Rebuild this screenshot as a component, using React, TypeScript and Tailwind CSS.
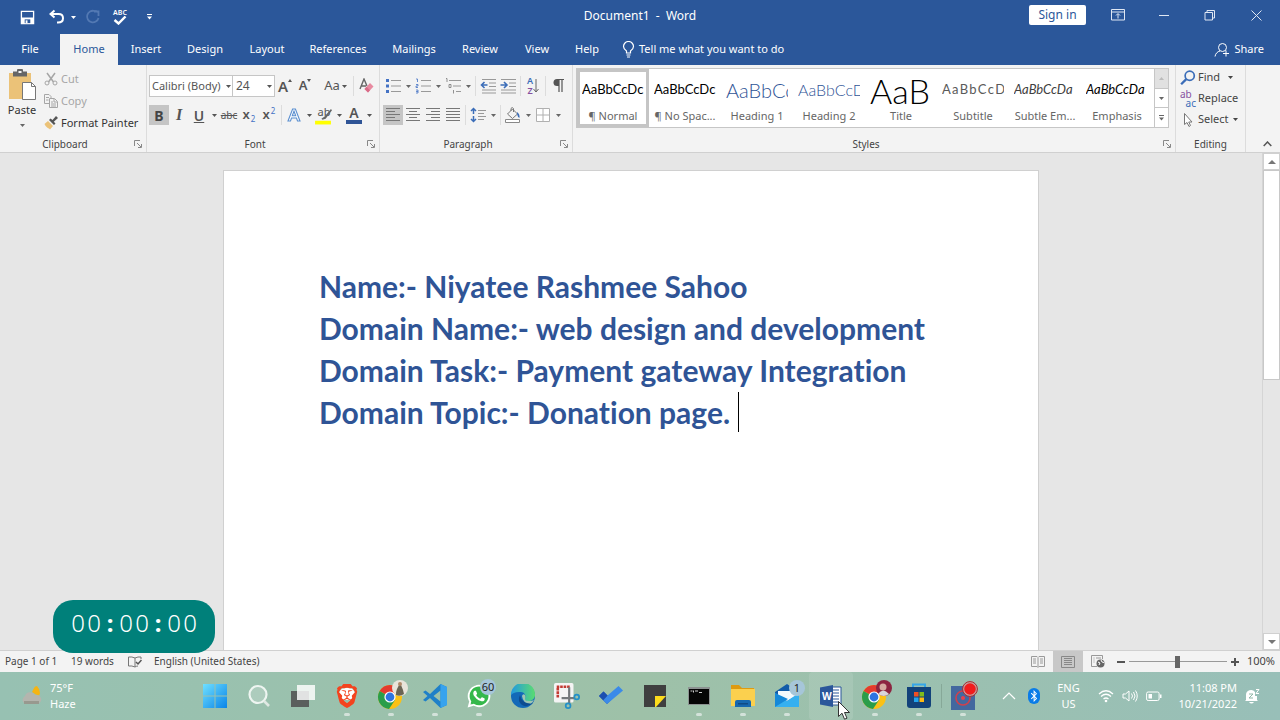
import React from "react";
import { FaBluetoothB, FaBrave, FaWhatsapp } from "react-icons/fa6";
import clsx from "clsx";

type IconProps = { children: React.ReactNode; box?: string; className?: string };

function Icon({ children, box = "0 0 16 16", className = "size-4" }: IconProps) {
  return (
    <svg viewBox={box} className={clsx("shrink-0", className)} fill="none" aria-hidden="true">
      {children}
    </svg>
  );
}

function Caret({ className = "w-[10px]" }: { className?: string }) {
  return (
    <span className={clsx("flex justify-center", className)}>
      <Icon box="0 0 5 3" className="w-[5px] h-[3px]">
        <path d="M0 0h5L2.5 3z" fill="currentColor" />
      </Icon>
    </span>
  );
}

function Tool({ label, active, wide, children }: { label: string; active?: boolean; wide?: boolean; children: React.ReactNode }) {
  return (
    <button
      aria-label={label}
      className={clsx("h-5 flex items-center justify-center shrink-0", wide ? "w-9" : "w-5", active && "bg-[#c5c5c5]")}
    >
      {children}
    </button>
  );
}

function Divider() {
  return <span className="w-px h-5 mx-0.5 bg-[#dcdcdc] shrink-0" />;
}

function Group({ title, launcher, className, children }: { title: string; launcher?: boolean; className: string; children: React.ReactNode }) {
  return (
    <section className={clsx("relative flex flex-col border-r border-[#dcdcdc] shrink-0", className)}>
      <div className="flex-1">{children}</div>
      <div className={clsx("h-4 text-[10px] leading-4 text-center text-[#444]", launcher && "pr-4")}>{title}</div>
      {launcher && (
        <button aria-label={`${title} settings`} className="absolute right-1 bottom-1">
          <Icon box="0 0 8 8" className="size-2">
            <path d="M.5 6V.5H6M3 3l4 4M7.5 4v3.500H4" stroke="#888" />
          </Icon>
        </button>
      )}
    </section>
  );
}

const tabs = [
  { name: "File", style: "w-[60px]" },
  { name: "Home", style: "w-[58px] bg-[#f3f3f3] text-[#2b579a]" },
  { name: "Insert", style: "w-14" },
  { name: "Design", style: "w-[62px]" },
  { name: "Layout", style: "w-[62px]" },
  { name: "References", style: "w-20" },
  { name: "Mailings", style: "w-[72px]" },
  { name: "Review", style: "w-[60px]" },
  { name: "View", style: "w-[54px]" },
  { name: "Help", style: "w-[46px]" },
];

const styles = [
  { name: "¶ Normal", text: "AaBbCcDc", look: "text-[13px] text-black" },
  { name: "¶ No Spac...", text: "AaBbCcDc", look: "text-[13px] text-black" },
  { name: "Heading 1", text: "AaBbCc", look: "text-[20px] font-light text-[#2f5496]" },
  { name: "Heading 2", text: "AaBbCcD", look: "text-[16px] font-light text-[#2f5496]" },
  { name: "Title", text: "AaB", look: "text-[34px] font-light text-black" },
  { name: "Subtitle", text: "AaBbCcD", look: "text-[13px] tracking-widest text-[#5a5a5a]" },
  { name: "Subtle Em...", text: "AaBbCcDa", look: "text-[13px] italic text-[#404040]" },
  { name: "Emphasis", text: "AaBbCcDa", look: "text-[13px] italic text-black" },
];

const lines = [
  "Name:- Niyatee Rashmee Sahoo",
  "Domain Name:- web design and development",
  "Domain Task:- Payment gateway Integration",
  "Domain Topic:- Donation page.",
];

function TitleBar() {
  return (
    <header className="relative h-[34px] flex items-center justify-between bg-[#2b579a] text-white shrink-0">
      <div className="flex items-center pl-5 h-full">
        <button aria-label="Save">
          <Icon className="size-[15px]">
            <path d="M1.500 1.500h13v13h-13z" stroke="#fff" strokeWidth="1.400" />
            <path d="M1.500 8h13v6.500h-13z" fill="#fff" />
            <path d="M5 10h6v4H5z" fill="#2b579a" />
            <path d="M6 11h2v3H6z" fill="#fff" />
          </Icon>
        </button>
        <button aria-label="Undo" className="ml-[14px]">
          <Icon>
            <path d="M5.500 1.500 1.500 5l4 3.500M2 5h7.500c3 0 4.500 2 4.500 4.200S12.500 13.500 9 13.500H8" stroke="#fff" strokeWidth="2" />
          </Icon>
        </button>
        <Caret className="w-4" />
        <button aria-label="Redo" className="ml-1">
          <Icon>
            <path d="M9 2.500h4.500V7M13 3c-1-.8-2-1-3.500-1A5.800 5.800 0 1 0 13.500 9" stroke="#5379b3" strokeWidth="1.800" />
          </Icon>
        </button>
        <button aria-label="Spelling" className="ml-3 flex flex-col items-center text-[7px] leading-[7px] font-semibold">
          <span>ABC</span>
          <Icon box="0 0 14 9" className="w-[14px] h-[9px]">
            <path d="m1.500 4 4 3.500L12.500.500" stroke="#fff" strokeWidth="2.400" />
          </Icon>
        </button>
        <button aria-label="Customize" className="ml-5">
          <Icon box="0 0 5 6" className="w-[5px] h-[6px]">
            <path d="M0 0h5v1H0zM0 2.500h5L2.500 5.500z" fill="#fff" />
          </Icon>
        </button>
      </div>
      <h1 className="absolute left-1/2 -translate-x-1/2 top-2 text-[12px] leading-4 whitespace-pre">Document1  -  Word</h1>
      <div className="flex items-center h-[30px] self-start">
        <button className="w-[57px] h-5 rounded-[2px] bg-white text-[12px] leading-5 text-[#2b579a]">Sign in</button>
        <button aria-label="Ribbon options" className="w-16 flex justify-center">
          <Icon box="0 0 14 12" className="w-[14px] h-3">
            <path d="M.5.500h13v10.500H.5zM.5 3h13M7 9.500V5M5 6.500l2-2 2 2" stroke="#dfe7f3" />
          </Icon>
        </button>
        <button aria-label="Minimize" className="w-7 flex justify-center">
          <span className="w-[10px] h-px bg-[#dfe7f3]" />
        </button>
        <button aria-label="Restore" className="w-16 flex justify-center">
          <Icon box="0 0 12 12" className="size-3">
            <path d="M1 3.500h7.500V11H1zM3 3.500v-2h7.500V9h-2" stroke="#dfe7f3" />
          </Icon>
        </button>
        <button aria-label="Close" className="w-[38px] pr-[10px] flex justify-center">
          <Icon box="0 0 11 11" className="size-[11px]">
            <path d="m.5.500 10 10M10.500.500l-10 10" stroke="#dfe7f3" />
          </Icon>
        </button>
      </div>
    </header>
  );
}

function Tabs() {
  return (
    <nav className="h-[31px] flex bg-[#2b579a] text-white text-[11px] shrink-0">
      {tabs.map((tab) => (
        <button key={tab.name} className={clsx("h-full", tab.style)}>
          {tab.name}
        </button>
      ))}
      <button className="ml-3 flex items-center gap-1">
        <Icon box="0 0 13 17" className="w-[13px] h-[17px]">
          <path d="M4.500 12V10C2.500 8.500 1.500 7.500 1.500 5.500a5 5 0 0 1 10 0c0 2-1 3-3 4.500v2zM4.500 14h4M5 16h3" stroke="#fff" strokeWidth="1.200" />
        </Icon>
        Tell me what you want to do
      </button>
      <button className="ml-auto mr-4 flex items-center gap-1">
        <Icon className="size-4">
          <circle cx="8.500" cy="5.500" r="4" stroke="#fff" />
          <path d="M1 14.500c.5-3 2.500-5 5-5.500M9 11.500h6M12 8.500v6" stroke="#fff" />
        </Icon>
        Share
      </button>
    </nav>
  );
}

function Clipboard() {
  return (
    <Group title="Clipboard" launcher className="w-[147px]">
      <div className="flex pt-[3px] pl-2 text-[11px] text-[#333]">
        <button className="flex flex-col items-center w-7 leading-4">
          <Icon box="0 0 30 34" className="w-[30px] h-[34px]">
            <path d="M2 5h22v26H2z" fill="#ebc278" />
            <path d="M6 3.500h4V2q0-1 1-1h4q1 0 1 1v1.500h4v5H6z" fill="#666" />
            <path d="M11.500 3h3v2h-3z" fill="#f3f3f3" />
            <path d="M15.500 14.500h9l4 4v13h-13z" fill="#fff" stroke="#777" />
            <path d="M24.500 14.500v4h4" stroke="#777" />
          </Icon>
          Paste
          <span className="pt-1.5 text-[#666]">
            <Caret />
          </span>
        </button>
        <div className="ml-2 flex flex-col">
          <button className="h-[22px] flex items-center gap-[3px] text-[#a6a6a6]" disabled>
            <Icon box="0 0 14 14" className="size-[14px]">
              <path d="m3 1 6.500 9M11 1 4.500 10" stroke="#a6a6a6" strokeWidth="1.500" />
              <circle cx="3" cy="11" r="2" stroke="#a6a6a6" />
              <circle cx="11" cy="11" r="2" stroke="#a6a6a6" />
            </Icon>
            Cut
          </button>
          <button className="h-[22px] flex items-center gap-[3px] text-[#a6a6a6]" disabled>
            <Icon box="0 0 14 14" className="size-[14px]">
              <path d="M5 9.500H.5v-9H5L7 2.500v2M2 3.500h3M2 6h2.500M5.500 4.500h5l3 3v6h-8zM10 5v3h3M7 8h2M7 10h5M7 12h5" stroke="#a6a6a6" />
            </Icon>
            Copy
          </button>
          <button className="h-[22px] flex items-center gap-[3px] whitespace-nowrap">
            <Icon box="0 0 14 14" className="size-[14px]">
              <path d="M1 7.500 4 5l5 5-3 3.500C5 12 2 12 .5 8z" fill="#ebc278" />
              <path d="m5 4 5 5 1.500-1.500-1.700-1.700L14 2 12 0 8.500 4 6.500 2.500z" fill="#555" />
            </Icon>
            Format Painter
          </button>
        </div>
      </div>
    </Group>
  );
}

function FontGroup() {
  return (
    <Group title="Font" launcher className="w-[233px]">
      <div className="flex items-center h-[22px] mt-[10px] pl-0.5 text-[#555]">
        <div className="flex items-center h-[22px] w-[84px] border border-[#c6c6c6] bg-white">
          <select aria-label="Font" className="appearance-none w-[74px] pl-[2px] text-[11px] text-[#555]">
            <option>Calibri (Body)</option>
          </select>
          <Caret className="w-2" />
        </div>
        <div className="flex items-center h-[22px] w-[43px] -ml-px border border-[#c6c6c6] bg-white">
          <select aria-label="Font size" className="appearance-none w-[31px] pl-[3px] text-[12px] text-[#555]">
            <option>24</option>
          </select>
          <Caret />
        </div>
        <Tool label="Grow font">
          <span className="text-[15px] font-semibold">A</span>
          <Icon box="0 0 4 3" className="w-1 h-[3px] mb-3">
            <path d="M0 3h4L2 0z" fill="#555" />
          </Icon>
        </Tool>
        <Tool label="Shrink font">
          <span className="text-[13px] font-semibold">A</span>
          <Icon box="0 0 4 3" className="w-1 h-[3px] mb-3">
            <path d="M0 0h4L2 3z" fill="#555" />
          </Icon>
        </Tool>
        <Tool label="Change case" wide>
          <span className="pl-2 text-[13px]">Aa</span>
          <Caret />
        </Tool>
        <Divider />
        <Tool label="Clear formatting">
          <Icon>
            <path d="m2 11 4-10 3 7M3.500 8H8" stroke="#666" strokeWidth="1.400" />
            <path d="m6.500 11 5.500-6 3.500 3.500-5.500 6z" fill="#e88aa0" />
            <path d="m6.500 11 2-2.200 3.500 3.500-2 2.200z" fill="#d96b88" />
          </Icon>
        </Tool>
      </div>
      <div className="flex items-center h-5 mt-2 pl-0.5 text-[#555]">
        <Tool label="Bold" active>
          <b className="text-[14px] text-[#444]">B</b>
        </Tool>
        <Tool label="Italic">
          <i className="font-['Liberation_Serif'] font-bold text-[16px]">I</i>
        </Tool>
        <Tool label="Underline">
          <span className="text-[14px] font-semibold underline">U</span>
        </Tool>
        <Caret />
        <Tool label="Strikethrough">
          <s className="text-[10px]">abc</s>
        </Tool>
        <Tool label="Subscript">
          <span className="text-[13px] font-semibold">x</span>
          <span className="text-[8px] text-[#4472c4] pt-2 pl-px">2</span>
        </Tool>
        <Tool label="Superscript">
          <span className="text-[13px] font-semibold">x</span>
          <span className="text-[8px] text-[#4472c4] pb-2 pl-px">2</span>
        </Tool>
        <Divider />
        <Tool label="Text effects">
          <Icon>
            <path d="m2 14 4.600-12h2.800L14 14h-2.500l-1-3h-5l-1 3zM6.300 8.700h3.400L8 4z" fill="#fff" stroke="#5b8fd0" strokeWidth="1.100" />
          </Icon>
        </Tool>
        <Caret />
        <Tool label="Highlight">
          <span className="relative flex h-5 items-start">
            <span className="text-[11px] leading-[13px]">ab</span>
            <Icon box="0 0 17 17" className="absolute -left-1 top-0.5 size-[18px]">
              <path d="m16 2-6 7-3 2 1 1 3-1 6-8z" fill="#666" />
              <path d="M1 13h15v3.500H1z" fill="#ff0" />
            </Icon>
          </span>
        </Tool>
        <Caret />
        <Tool label="Font colour">
          <span className="w-4 h-[18px] border-b-4 border-[#2f5496] text-[14px] leading-[14px] font-semibold text-center">A</span>
        </Tool>
        <Caret />
      </div>
    </Group>
  );
}

function ParagraphGroup() {
  return (
    <Group title="Paragraph" launcher className="w-[193px]">
      <div className="flex items-center h-5 mt-[11px] pl-[3px] text-[#666]">
        <Tool label="Bullets">
          <Icon>
            <path d="M6 2.500h10M6 8h10M6 13.500h10" stroke="#999" />
            <path d="M1 1h3v3H1zM1 6.500h3v3H1zM1 12h3v3H1z" fill="#4472c4" />
          </Icon>
        </Tool>
        <Caret />
        <Tool label="Numbering">
          <Icon>
            <path d="M6 2.500h10M6 8h10M6 13.500h10" stroke="#999" />
            <path d="M1 1h1.500v3M1 6.500h2V8H1v1.500h2M1 12h2v3H1M1 13.500h2" stroke="#4472c4" strokeWidth=".8" />
          </Icon>
        </Tool>
        <Caret />
        <Tool label="Multilevel list">
          <Icon>
            <path d="M4 2.500h12M8 8h8M11 13.500h5" stroke="#999" />
            <path d="M1 .500h1V4M4 6.500h2v3H4zM8.500 12v3.500" stroke="#777" strokeWidth=".8" />
          </Icon>
        </Tool>
        <Caret />
        <Divider />
        <Tool label="Decrease indent">
          <Icon>
            <path d="M2 1.500h14M9 5h7M9 8.500h7M2 12h14M2 15h14" stroke="#999" />
            <path d="M7.500 7H1.500M4.500 4l-3 3 3 3" stroke="#3b6db8" strokeWidth="1.600" />
          </Icon>
        </Tool>
        <Tool label="Increase indent">
          <Icon>
            <path d="M1 1.500h15M9 5h7M9 8.500h7M1 12h15M1 15h15" stroke="#999" />
            <path d="M.5 7h6M4 4l3 3-3 3" stroke="#3b6db8" strokeWidth="1.600" />
          </Icon>
        </Tool>
        <Divider />
        <Tool label="Sort">
          <span className="flex flex-col text-[9px] leading-[10px] font-semibold">
            <span className="text-[#3b6db8]">A</span>
            <span className="text-[#8650a0]">Z</span>
          </span>
          <Icon box="0 0 6 16" className="w-[6px] h-4">
            <path d="M3 1v13M.5 11 3 14l2.500-3" stroke="#666" />
          </Icon>
        </Tool>
        <Divider />
        <Tool label="Show marks">
          <Icon>
            <path d="M8 1.500h6M9 1v13M12 1v13" stroke="#555" strokeWidth="1.200" />
            <path d="M9 1H7a3.500 3.500 0 0 0 0 7h2z" fill="#555" />
          </Icon>
        </Tool>
      </div>
      <div className="flex items-center h-5 mt-[9px] pl-[3px] text-[#666]">
        <Tool label="Align left" active>
          <Icon>
            <path d="M1 1.500h14M1 4.500h9M1 7.500h14M1 10.500h9M1 13.500h14" stroke="#777" />
          </Icon>
        </Tool>
        <Tool label="Centre">
          <Icon>
            <path d="M1 1.500h14M4 4.500h8M1 7.500h14M4 10.500h8M1 13.500h14" stroke="#777" />
          </Icon>
        </Tool>
        <Tool label="Align right">
          <Icon>
            <path d="M1 1.500h14M6 4.500h9M1 7.500h14M6 10.500h9M1 13.500h14" stroke="#777" />
          </Icon>
        </Tool>
        <Tool label="Justify">
          <Icon>
            <path d="M1 1.500h14M1 4.500h14M1 7.500h14M1 10.500h14M1 13.500h14" stroke="#777" />
          </Icon>
        </Tool>
        <Divider />
        <Tool label="Line spacing">
          <Icon>
            <path d="M3.500 1.500V7M3.500 9v5.500M1 4l2.500-2.500L6 4M1 12l2.500 2.500L6 12" stroke="#3b6db8" strokeWidth="1.500" />
            <path d="M8 3.500h8M8 6.500h6M8 9.500h8M8 12.500h6" stroke="#999" />
          </Icon>
        </Tool>
        <Caret />
        <Divider />
        <Tool label="Shading">
          <Icon>
            <path d="m2.500 7 5-5 5 5-5 4.500zM6 4V1.500Q7-.5 8.500 1.500V5" stroke="#777" />
            <path d="M12 5q3 2 2.500 6-2-1-2.500-4z" fill="#3b6db8" />
            <path d="M.5 12.500h14v3H.5z" fill="#fff" stroke="#888" />
          </Icon>
        </Tool>
        <Caret />
        <Tool label="Borders">
          <Icon>
            <path d="M1.500 1.500h13v13h-13zM8 1.500v13M1.500 8h13" stroke="#b0b0b0" fill="#fff" />
          </Icon>
        </Tool>
        <Caret />
      </div>
    </Group>
  );
}

function StylesGroup() {
  return (
    <Group title="Styles" launcher className="flex-1 min-w-0">
      <div className="flex mt-[3px] ml-[3px] mr-[6px] h-[60px] border border-[#c6c6c6] bg-white">
        <div className="flex flex-1 overflow-hidden">
          {styles.map((style, i) => (
            <button
              key={style.name}
              className={clsx("w-[72px] h-full shrink-0 flex flex-col items-center border-[3px]", i === 0 ? "border-[#c5c5c5]" : "border-transparent")}
            >
              <span className="flex w-[62px] h-9 items-center overflow-hidden">
                <span className={clsx("font-['Lato','Open_Sans',sans-serif] whitespace-nowrap", style.look)}>{style.text}</span>
              </span>
              <span className="text-[11px] leading-4 text-[#666] whitespace-nowrap">{style.name}</span>
            </button>
          ))}
        </div>
        <div className="w-[14px] flex flex-col border-l border-[#c6c6c6] text-[#666]">
          <button aria-label="Previous styles" className="flex-1 bg-[#e1e1e1] flex items-center justify-center text-[#bbb]">
            <Icon box="0 0 5 3" className="w-[5px] h-[3px]">
              <path d="M0 3h5L2.500 0z" fill="currentColor" />
            </Icon>
          </button>
          <button aria-label="Next styles" className="flex-1 flex items-center justify-center border-y border-[#c6c6c6]">
            <Caret />
          </button>
          <button aria-label="More styles" className="flex-1 flex items-center justify-center">
            <Icon box="0 0 5 6" className="w-[5px] h-[6px]">
              <path d="M0 0h5v1H0zM0 2.500h5L2.500 5.500z" fill="#666" />
            </Icon>
          </button>
        </div>
      </div>
    </Group>
  );
}

function EditingGroup() {
  return (
    <Group title="Editing" className="w-[70px]">
      <div className="flex flex-col pt-0.5 pl-1 text-[11px] text-[#444]">
        <button className="h-[21px] flex items-center gap-0.5">
          <Icon box="0 0 14 14" className="size-4">
            <circle cx="8.500" cy="5" r="4" stroke="#3b6db8" strokeWidth="1.500" />
            <path d="M5.500 8 1 12.500" stroke="#3b6db8" strokeWidth="2" />
          </Icon>
          Find
          <Caret className="w-4" />
        </button>
        <button className="h-[21px] flex items-center gap-0.5">
          <span className="w-4 flex flex-col text-[10px] leading-[9px] text-left">
            <span className="text-[#8650a0]">ab</span>
            <span className="text-[#3b6db8] text-right">ac</span>
          </span>
          Replace
        </button>
        <button className="h-[21px] flex items-center gap-0.5">
          <Icon>
            <path d="M4.500 1.500v11l2.500-2 2 4 1.500-1-1.800-3.500H12z" stroke="#777" fill="#fff" />
          </Icon>
          Select
          <Caret />
        </button>
      </div>
    </Group>
  );
}

function DocumentArea() {
  return (
    <main className="flex-1 min-h-0 flex bg-[#e6e6e6]">
      <div className="flex-1 flex justify-center pt-[17px] overflow-hidden">
        <article className="w-[816px] px-[95px] pt-[94px] bg-white border border-b-0 border-[#d0d0d0] font-['Lato','Open_Sans',sans-serif] text-[30px] leading-[42px] font-bold text-[#2f5496] whitespace-nowrap [font-variant-ligatures:none]">
          {lines.map((line, i) => (
            <p key={line} className="flex items-center">
              {line}
              {i === lines.length - 1 && <span className="w-px h-10 ml-2 bg-black" />}
            </p>
          ))}
        </article>
      </div>
      <div className="w-[18px] flex flex-col border-l border-[#d5d5d5] bg-[#e6e6e6]">
        <button aria-label="Scroll up" className="h-[17px] flex items-center justify-center border border-[#d0d0d0] bg-white">
          <Icon box="0 0 8 4" className="w-2 h-1">
            <path d="M0 4h8L4 0z" fill="#777" />
          </Icon>
        </button>
        <div className="h-[210px] border border-[#c8c8c8] bg-white" />
        <button aria-label="Scroll down" className="mt-auto h-[17px] flex items-center justify-center border border-[#d0d0d0] bg-white">
          <Icon box="0 0 8 4" className="w-2 h-1">
            <path d="M0 0h8L4 4z" fill="#777" />
          </Icon>
        </button>
      </div>
    </main>
  );
}

function StatusBar() {
  return (
    <footer className="h-[22px] flex items-center justify-between pl-[5px] pr-[5px] bg-[#f3f3f3] border-t border-[#d0d0d0] text-[10px] text-[#444] shrink-0">
      <div className="flex items-center">
        <span className="w-[66px]">Page 1 of 1</span>
        <span className="w-[57px]">19 words</span>
        <Icon box="0 0 14 12" className="w-[14px] h-3 mr-3">
          <path d="M7 2v9M7 2Q4 .500.500 1v9Q4 9.500 7 11q1.500-1 3-1M7 2q3-1.500 6-1v2" stroke="#777" />
          <path d="m8 6 2 2 3.500-4" stroke="#555" strokeWidth="1.500" />
        </Icon>
        <span>English (United States)</span>
      </div>
      <div className="flex items-center h-full">
        <button aria-label="Read mode" className="w-[30px] flex justify-center">
          <Icon box="0 0 14 12" className="w-[14px] h-3">
            <path d="M.5.500h5.500l1 1 1-1h5.500v10H8l-1 1-1-1H.5zM7 2v9M2 3h3M2 5h3M2 7h3M9 3h3M9 5h3M9 7h3" stroke="#9a9a9a" />
          </Icon>
        </button>
        <button aria-label="Print layout" className="w-[30px] h-full flex items-center justify-center bg-[#c8c8c8]">
          <Icon box="0 0 14 12" className="w-[14px] h-3">
            <path d="M.5.500h13v11H.5zM3 2.500h8M3 4.500h8M3 6.500h8M3 8.500h8" stroke="#888" />
          </Icon>
        </button>
        <button aria-label="Web layout" className="w-[30px] flex justify-center">
          <Icon box="0 0 14 13" className="w-[14px] h-[13px]">
            <path d="M6 11.500H.5v-11h11V4M2.500 3h1M2.500 5h1M2.500 7h1M5 3h5" stroke="#999" />
            <circle cx="9.500" cy="8.500" r="4" fill="#666" />
            <path d="m7 7 2 1-1 2M10 5l1 2 2 .500" stroke="#fff" />
          </Icon>
        </button>
        <button aria-label="Zoom out" className="mx-1 w-2 h-0.5 bg-[#555]" />
        <input
          type="range"
          aria-label="Zoom"
          defaultValue={50}
          className="appearance-none w-[98px] h-px bg-[#999] [&::-webkit-slider-thumb]:appearance-none [&::-webkit-slider-thumb]:w-[5px] [&::-webkit-slider-thumb]:h-3 [&::-webkit-slider-thumb]:bg-[#666]"
        />
        <button aria-label="Zoom in" className="mx-1">
          <Icon box="0 0 8 8" className="size-2">
            <path d="M4 0v8M0 4h8" stroke="#555" strokeWidth="2" />
          </Icon>
        </button>
        <span className="ml-1 text-[11px]">100%</span>
      </div>
    </footer>
  );
}

function ChromeLogo({ badge }: { badge: React.ReactNode }) {
  return (
    <Icon box="0 0 34 34" className="size-[34px]">
      <circle cx="16" cy="18" r="12" fill="#fbc116" />
      <path d="M16 18 5.600 12A12 12 0 0 1 26.400 12z" fill="#e33b2e" />
      <path d="M5.600 12A12 12 0 0 0 15 30l6-9-5-3z" fill="#2a9d4a" />
      <circle cx="16" cy="18" r="5.600" fill="#fff" />
      <circle cx="16" cy="18" r="4.400" fill="#2f74e0" />
      {badge}
    </Icon>
  );
}

const apps: { name: string; running?: boolean; icon: React.ReactNode }[] = [
  {
    name: "Start",
    icon: (
      <Icon box="0 0 24 24" className="size-6">
        <defs>
          <linearGradient id="win" x1="0" y1="0" x2="1" y2="1">
            <stop stopColor="#6fe0ff" />
            <stop offset="1" stopColor="#0a84e8" />
          </linearGradient>
        </defs>
        <path d="M0 0h11.500v11.500H0zM12.500 0H24v11.500H12.500zM0 12.500h11.500V24H0zM12.500 12.500H24V24H12.500z" fill="url(#win)" />
      </Icon>
    ),
  },
  {
    name: "Search",
    icon: (
      <Icon box="0 0 24 24" className="size-6">
        <circle cx="11" cy="10.500" r="8.500" stroke="#eef5f1" strokeWidth="2.200" fill="#ffffff30" />
        <path d="m17 17 5 5" stroke="#dfe8e2" strokeWidth="2.600" />
      </Icon>
    ),
  },
  {
    name: "Task view",
    icon: (
      <Icon box="0 0 24 24" className="size-6">
        <path d="M0 7h18v16H0z" fill="#5a5f5d" />
        <path d="M6 1h18v15H6z" fill="#fff" fillOpacity=".82" />
      </Icon>
    ),
  },
  {
    name: "Brave",
    running: true,
    icon: (
      <span className="relative flex">
        <span className="absolute inset-x-1 top-1 bottom-2 bg-white rounded-full" />
        <FaBrave className="relative size-6 text-[#f4431e]" />
      </span>
    ),
  },
  {
    name: "Chrome",
    running: true,
    icon: (
      <ChromeLogo
        badge={
          <g>
            <circle cx="26" cy="9" r="8" fill="#e8e4da" />
            <path d="M22 16q0-4 1-6l2-4h2l2 5 1 4q-4 3-8 1z" fill="#6b6554" />
            <circle cx="26" cy="5" r="2" fill="#b08a68" />
          </g>
        }
      />
    ),
  },
  {
    name: "Visual Studio Code",
    running: true,
    icon: (
      <Icon box="0 0 24 24" className="size-6">
        <path d="m17.500 0 6.500 3v18l-6.500 3L7 14l-4.500 3.500L0 16l4.500-4L0 8l2.500-1.500L7 10zM17.500 6.500 10.500 12l7 5.500z" fill="#1f80c8" fillRule="evenodd" />
        <path d="m17.500 0 6.500 3v18l-6.500 3z" fill="#36a3ee" />
      </Icon>
    ),
  },
  {
    name: "WhatsApp",
    running: true,
    icon: (
      <span className="relative flex">
        <span className="absolute inset-0.5 bg-[#35b84b] rounded-full" />
        <FaWhatsapp className="relative size-[26px] text-white" />
        <span className="absolute -top-1 left-[14px] size-4 rounded-full bg-[#a6c6d9] text-[11px] leading-4 text-center text-[#222]">60</span>
      </span>
    ),
  },
  {
    name: "Edge",
    icon: (
      <Icon box="0 0 24 24" className="size-6">
        <defs>
          <linearGradient id="edge" x1="0" y1="0" x2="1" y2="0">
            <stop stopColor="#2299e0" />
            <stop offset="1" stopColor="#5bdc70" />
          </linearGradient>
        </defs>
        <circle cx="12" cy="12" r="12" fill="#1369b8" />
        <path d="M0 11A12 12 0 0 1 24 10.500c.3 4-3 6.500-6.500 6.500-3 0-4.200-1.300-3.500-2.500 1-2 .5-6-4-6.500C5 7.500 1 9 0 11z" fill="url(#edge)" />
        <path d="M9 11q-3 6 2 10 5 3 11-2Q11 21 9 11z" fill="#0d4c91" />
        <path d="M11 12q1-3 3-1 1 2 0 3.500-.5 2.500 4.500 2.500 3 0 4.500-1.500-1 3-3 4Q12 20 11 12z" fill="#9fc5b2" />
      </Icon>
    ),
  },
  {
    name: "Snipping Tool",
    icon: (
      <Icon box="0 0 24 24" className="size-[26px]">
        <rect x="0" y="0" width="18" height="18" rx="1.500" fill="#f4f4f4" />
        <path d="M2.500 3.500h12M3.500 4.500v9" stroke="#c23a32" strokeWidth="2.400" strokeDasharray="2.400 .8" />
        <path d="M14 4v15M7 14h12" stroke="#75797c" strokeWidth="2" />
        <circle cx="13" cy="21" r="2.200" stroke="#2490c8" strokeWidth="1.600" />
        <circle cx="21" cy="13" r="2.200" stroke="#2490c8" strokeWidth="1.600" />
      </Icon>
    ),
  },
  {
    name: "To Do",
    icon: (
      <Icon box="0 0 24 24" className="size-6">
        <path d="m0 12 4.500-4.500 8 8L8 20z" fill="#1f56b8" />
        <path d="M8 20 3.700 15.700 19.500 2 24 6.500z" fill="#3b8ae8" />
        <path d="m0 12 4.500-4.500 4 4-4.300 4.700z" fill="#1c4fb0" />
      </Icon>
    ),
  },
  {
    name: "Sticky Notes",
    icon: (
      <Icon box="0 0 22 22" className="size-[22px]">
        <path d="M0 0h22v22H0z" fill="#3f3f3f" />
        <path d="M11 11h11L12 22h-1z" fill="#fddc1c" />
      </Icon>
    ),
  },
  {
    name: "Command Prompt",
    running: true,
    icon: (
      <Icon box="0 0 22 18" className="w-[22px] h-[18px]">
        <path d="M0 0h22v18H0z" fill="#8c9291" />
        <path d="M1 2h20v15H1z" fill="#050505" />
        <path d="M2.500 4h2M5.500 3.500v2M7 4h3M11 5.500h3" stroke="#ccc" />
      </Icon>
    ),
  },
  {
    name: "File Explorer",
    running: true,
    icon: (
      <Icon box="0 0 26 24" className="w-[26px] h-6">
        <path d="M1 1h8l3 3h12v8H1z" fill="#dd9b12" />
        <path d="M1 5h24v17H1z" fill="#fbd04e" />
        <path d="M5 23v-5q0-2 2-2h12q2 0 2 2v5z" fill="#1768b0" />
        <path d="M8 19h10v1.500H8z" fill="#104b86" />
      </Icon>
    ),
  },
  {
    name: "Mail",
    running: true,
    icon: (
      <span className="relative flex">
        <Icon box="0 0 24 24" className="size-6">
          <path d="M0 8 12 0l12 8v3L12 18 0 11z" fill="#125ca8" />
          <path d="M3 7h18v5l-9 5-9-5z" fill="#f5f9fc" />
          <path d="M0 9v14h24V9l-12 8z" fill="#36b0f0" />
          <path d="m0 23 13-8L0 9z" fill="#1688d8" />
        </Icon>
        <span className="absolute -top-1 left-[14px] size-4 rounded-full bg-[#a6c6d9] text-[11px] leading-4 text-center text-[#222]">1</span>
      </span>
    ),
  },
  {
    name: "Word",
    icon: (
      <span className="relative flex">
        <Icon box="0 0 22 22" className="size-[22px]">
          <path d="M11 2h10v18H11z" fill="#fff" stroke="#2b579a" />
          <path d="M13 5h6M13 8h6M13 11h6M13 14h6M13 17h6" stroke="#2b579a" />
          <path d="M0 2.500 13 0v22L0 19.500z" fill="#2b579a" />
        </Icon>
        <b className="absolute left-0.5 top-1 text-[10px] leading-[14px] text-white">W</b>
      </span>
    ),
  },
  {
    name: "Chrome profile",
    running: true,
    icon: (
      <ChromeLogo
        badge={
          <g>
            <circle cx="26" cy="9" r="8" fill="#8c2440" />
            <circle cx="25" cy="8" r="3.500" fill="#d6aaa0" />
            <path d="M20 15q5-7 11 0-5 4-11 0z" fill="#d9d5da" />
          </g>
        }
      />
    ),
  },
  {
    name: "Store",
    running: true,
    icon: (
      <Icon box="0 0 24 26" className="w-6 h-[26px]">
        <path d="M6 5V1.500h12V5" stroke="#36a6e8" strokeWidth="2" />
        <path d="M0 4h24v18q0 3-3 3H3q-3 0-3-3z" fill="#12427a" />
        <path d="M7 9h4.500v4.500H7z" fill="#f05023" />
        <path d="M12.500 9H17v4.500h-4.500z" fill="#7fba1c" />
        <path d="M7 14.500h4.500V19H7z" fill="#20a4ee" />
        <path d="M12.500 14.500H17V19h-4.500z" fill="#fdb913" />
      </Icon>
    ),
  },
  {
    name: "Screen recorder",
    running: true,
    icon: (
      <Icon box="0 0 30 30" className="size-[30px]">
        <path d="M3 5h24v24H3z" fill="#43689f" />
        <circle cx="15" cy="17" r="7" stroke="#d0404c" strokeWidth="1.600" />
        <circle cx="15" cy="17" r="2" fill="#e8404c" />
        <circle cx="22" cy="8" r="7.400" fill="#c9a0a0" stroke="#a32a2e" />
        <circle cx="22" cy="8" r="5.800" fill="#f01c1c" />
      </Icon>
    ),
  },
];

function Taskbar() {
  return (
    <div className="relative h-12 flex items-center bg-linear-to-r from-[#97c1b2] via-[#9ec1a8] to-[#98bfb8] text-white text-[11px] leading-4 shrink-0">
      <button className="w-[193px] h-full pl-5 flex items-center gap-2 text-left">
        <Icon box="0 0 22 22" className="size-[22px]">
          <path d="M14 3q1-2 3-2 3 3 3 7 0 2-2 3l-6-4z" fill="#f5b414" />
          <path d="M5 19a4.500 4.500 0 0 1 0-8 5.500 5.500 0 0 1 10-1 4.600 4.600 0 0 1 3 9z" fill="#b4b5ae" />
          <path d="M4 16h15v3H4z" fill="#98998f" />
        </Icon>
        <span>
          75°F
          <br />
          Haze
        </span>
      </button>
      <div className="flex h-full">
        {apps.map((app, i) => (
          <button
            key={app.name}
            aria-label={app.name}
            className={clsx(
              "relative w-11 h-full flex items-center justify-center",
              app.name === "Word" && "bg-white/10 rounded",
              i === apps.length - 1 && "before:absolute before:left-0 before:top-3 before:h-6 before:w-px before:bg-[#86a898]"
            )}
          >
            {app.icon}
            {app.running && <span className="absolute bottom-1 w-[6px] h-[3px] rounded-full bg-[#d3e2da]" />}
          </button>
        ))}
      </div>
      <div className="ml-auto h-full pr-5 flex items-center">
        <button aria-label="Hidden icons">
          <Icon box="0 0 14 8" className="w-[14px] h-2">
            <path d="m1 7 6-6 6 6" stroke="#fff" strokeWidth="1.200" />
          </Icon>
        </button>
        <button aria-label="Bluetooth" className="ml-3 w-3 h-4 rounded-full bg-[#0a7ce8] flex items-center justify-center">
          <FaBluetoothB className="size-3" />
        </button>
        <button className="ml-4 w-6 text-center">
          ENG
          <br />
          US
        </button>
        <button aria-label="Network, volume and battery" className="ml-[18px] flex items-center gap-2">
          <Icon className="size-4">
            <path d="M1 6q7-6.500 14 0M3 8.500q5-4.500 10 0M5.500 11q2.500-2 5 0" stroke="#fff" strokeWidth="1.300" />
            <circle cx="8" cy="13" r="1.300" fill="#fff" />
          </Icon>
          <Icon className="size-4">
            <path d="M1 6v4h2.500L7 13V3L3.500 6zM9.500 5.500q2 2.500 0 5M11.500 4q3 4 0 8M13.500 2.500q3.500 5.500 0 11" stroke="#fff" />
          </Icon>
          <Icon className="size-4">
            <rect x=".6" y="4" width="12.500" height="8.500" rx="1.500" stroke="#fff" />
            <path d="M2.500 6H6v4.500H2.500zM14 6.500h1.500V10H14z" fill="#fff" />
          </Icon>
        </button>
        <button className="ml-4 text-right">
          11:08 PM
          <br />
          10/21/2022
        </button>
        <button aria-label="Notifications" className="ml-[7px]">
          <Icon className="size-4">
            <path d="M2 12V7a5 5 0 0 1 9-3v4l2 0v4l1 1H1zM5 14h5q-2.500 3-5 0z" fill="#fff" />
            <path d="M12 1.500h3L12 5.500h3" stroke="#fff" />
            <path d="M5 6h4l-4 4h4" stroke="#91b8a9" />
          </Icon>
        </button>
      </div>
    </div>
  );
}

export default function App() {
  return (
    <div className="relative h-screen flex flex-col overflow-hidden font-['Noto_Sans','Open_Sans',sans-serif]">
      <TitleBar />
      <Tabs />
      <div className="relative h-[88px] flex bg-[#f3f3f3] border-b border-[#d0d0d0] shrink-0">
        <Clipboard />
        <FontGroup />
        <ParagraphGroup />
        <StylesGroup />
        <EditingGroup />
        <button aria-label="Collapse ribbon" className="w-[34px] flex items-end justify-end pr-2 pb-[5px]">
          <Icon box="0 0 9 6" className="w-[9px] h-[6px]">
            <path d="m.7 5 3.800-4 3.800 4" stroke="#555" strokeWidth="1.500" />
          </Icon>
        </button>
      </div>
      <DocumentArea />
      <StatusBar />
      <Taskbar />

      {/* Recording timer */}
      <div className="absolute left-[53px] bottom-[67px] w-[162px] h-[53px] rounded-[20px] bg-[#00807a] text-white">
        <div className="flex justify-center pt-[7px] text-[24px] leading-8 font-light">
          {"00:00:00".split("").map((char, i) => (
            <span key={i} className={clsx("w-4 text-center", char === ":" && "font-bold")}>
              {char}
            </span>
          ))}
        </div>
      </div>

      {/* Mouse pointer */}
      <Icon box="0 0 12 19" className="absolute left-[838px] bottom-0 w-3 h-[19px]">
        <path d="M.5.500v15l3.500-3.300 2.500 6 2.500-1-2.500-5.700h5z" fill="#fff" stroke="#333" />
      </Icon>
    </div>
  );
}
